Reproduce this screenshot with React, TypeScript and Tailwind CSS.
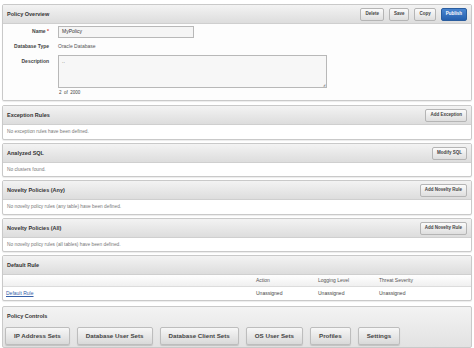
const font = { fontFamily: '"Liberation Sans", Arial, sans-serif' };

function SmallButton({ label, primary }: { label: string; primary?: boolean }) {
  return (
    <button
      className={
        primary
          ? "h-[13px] px-[4px] rounded-[2px] border border-[#2a5d9f] bg-gradient-to-b from-[#4a86d0] to-[#2560ae] text-white text-[4.5px] font-bold leading-none"
          : "h-[13px] px-[4px] rounded-[2px] border border-[#b5b5b5] bg-gradient-to-b from-[#fbfbfb] to-[#dedede] text-[#444] text-[4.5px] font-bold leading-none"
      }
    >
      {label}
    </button>
  );
}

function PanelHeader({ title, children }: { title: string; children?: React.ReactNode }) {
  return (
    <div className="h-[19px] flex items-center justify-between pl-[4px] pr-[4px] bg-gradient-to-b from-[#f3f3f3] to-[#dddddd] border-b border-[#cfcfcf]">
      <span className="text-[5.5px] font-bold text-[#333]">{title}</span>
      <div className="flex items-center gap-[5px]">{children}</div>
    </div>
  );
}

function Panel({ title, actions, children }: { title: string; actions?: React.ReactNode; children: React.ReactNode }) {
  return (
    <div className="border border-[#c9c9c9] rounded-[2px] bg-white shadow-[0_1px_1px_rgba(0,0,0,0.08)] overflow-hidden">
      <PanelHeader title={title}>{actions}</PanelHeader>
      {children}
    </div>
  );
}

function EmptyBody({ text, tall }: { text: string; tall?: boolean }) {
  return (
    <div className={(tall ? "h-[14px]" : "h-[13px]") + " flex items-center pl-[4px] text-[4.8px] text-[#777]"}>
      {text}
    </div>
  );
}

function BigButton({ label }: { label: string }) {
  return (
    <button className="h-[18px] px-[8px] rounded-[2px] border border-[#bdbdbd] bg-gradient-to-b from-[#f7f7f7] to-[#d9d9d9] text-[6.2px] font-bold text-[#444] shadow-[0_1px_1px_rgba(0,0,0,0.15)]">
      {label}
    </button>
  );
}

export default function App() {
  return (
    <div style={font} className="w-[474px] h-[348px] bg-white overflow-hidden pt-[4px] px-[2px] flex flex-col gap-[3px]">
      <Panel
        title="Policy Overview"
        actions={
          <>
            <SmallButton label="Delete" />
            <SmallButton label="Save" />
            <SmallButton label="Copy" />
            <SmallButton label="Publish" primary />
          </>
        }
      >
        <div className="h-[76px] bg-[#fdfdfd] text-[5px] pt-[2px]">
          <div className="flex items-center h-[12px]">
            <span className="w-[46px] text-right font-bold text-[#444]">
              Name <span className="text-[#c33]">*</span>
            </span>
            <div className="ml-[9px] w-[136px] h-[12px] border border-[#b8b8b8] bg-[#f5f5f5] flex items-center pl-[3px] text-[#333]">
              MyPolicy
            </div>
          </div>
          <div className="flex items-center h-[16px] mt-[1px]">
            <span className="w-[46px] text-right font-bold text-[#444]">Database Type</span>
            <span className="ml-[9px] text-[#555]">Oracle Database</span>
          </div>
          <div className="flex items-start">
            <span className="w-[46px] text-right font-bold text-[#444] mt-[3px]">Description</span>
            <div className="ml-[9px]">
              <div className="relative w-[269px] h-[33px] border border-[#b8b8b8] bg-[#f7f7f7] pl-[3px] pt-[2px] text-[#555]">
                ..
                <span className="absolute right-[1px] bottom-[0px] text-[3px] text-[#999]">◢</span>
              </div>
              <div className="mt-[2px] pl-[1px] text-[4.5px] text-[#444]">2&nbsp; of&nbsp; 2000</div>
            </div>
          </div>
        </div>
      </Panel>

      <div className="mt-[1px]">
        <Panel title="Exception Rules" actions={<SmallButton label="Add Exception" />}>
          <EmptyBody text="No exception rules have been defined." tall />
        </Panel>
      </div>

      <Panel title="Analyzed SQL" actions={<SmallButton label="Modify SQL" />}>
        <EmptyBody text="No clusters found." />
      </Panel>

      <Panel title="Novelty Policies (Any)" actions={<SmallButton label="Add Novelty Rule" />}>
        <EmptyBody text="No novelty policy rules (any table) have been defined." tall />
      </Panel>

      <Panel title="Novelty Policies (All)" actions={<SmallButton label="Add Novelty Rule" />}>
        <EmptyBody text="No novelty policy rules (all tables) have been defined." />
      </Panel>

      <Panel title="Default Rule">
        <div className="text-[5px]">
          <div className="grid grid-cols-[253px_62px_61px_1fr] h-[12px] items-center bg-gradient-to-b from-[#ffffff] to-[#f0f0f0] border-b border-[#dcdcdc] text-[#555]">
            <span></span>
            <span>Action</span>
            <span>Logging Level</span>
            <span>Threat Severity</span>
          </div>
          <div className="grid grid-cols-[253px_62px_61px_1fr] h-[13px] items-center text-[#444]">
            <span className="pl-[3px] text-[#3560a8] underline">Default Rule</span>
            <span>Unassigned</span>
            <span>Unassigned</span>
            <span>Unassigned</span>
          </div>
        </div>
      </Panel>

      <div className="mt-[2px] border border-[#c9c9c9] rounded-[2px] bg-gradient-to-b from-[#f3f3f3] to-[#e2e2e2] flex-1">
        <div className="h-[19px] flex items-center pl-[4px]">
          <span className="text-[5.5px] font-bold text-[#333]">Policy Controls</span>
        </div>
        <div className="flex items-center gap-[7px] pl-[2px] pt-[1px]">
          <BigButton label="IP Address Sets" />
          <BigButton label="Database User Sets" />
          <BigButton label="Database Client Sets" />
          <BigButton label="OS User Sets" />
          <BigButton label="Profiles" />
          <BigButton label="Settings" />
        </div>
      </div>
    </div>
  );
}
